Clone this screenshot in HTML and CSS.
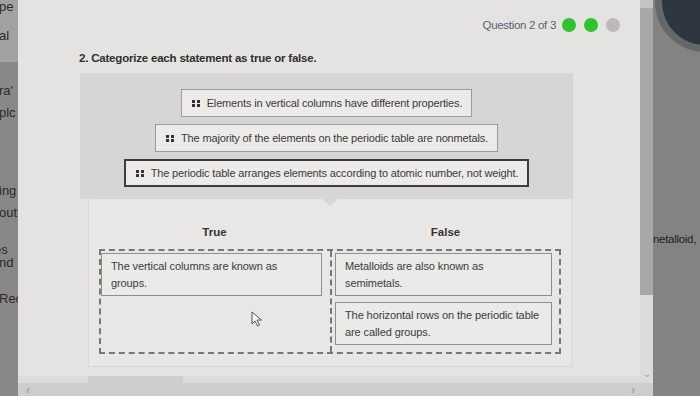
FILE: index.html
```html
<!DOCTYPE html>
<html>
<head>
<meta charset="utf-8">
<link rel="stylesheet" href="styles.css">
</head>
<body>
<div class="screen">
  <div class="left-strip">
    <div class="bg-top"></div>
    <div class="w w1">pe</div>
    <div class="w w2">al</div>
    <div class="w w3">ra'</div>
    <div class="w w4">plc</div>
    <div class="w w5">ing</div>
    <div class="w w6">outl</div>
    <div class="w w7">es</div>
    <div class="w w8">nd</div>
    <div class="w w9">Rec</div>
  </div>

  <div class="middle">
    <div class="upper">
      <div class="modal">
        <div class="header">
          <span class="qcount">Question 2 of 3</span>
          <span class="dot done"></span>
          <span class="dot done"></span>
          <span class="dot"></span>
        </div>
        <div class="title">2. Categorize each statement as true or false.</div>
        <div class="activity">
          <div class="dnd">
            <div class="chip"><span class="grip"><i></i><i></i><i></i><i></i></span>Elements in vertical columns have different properties.</div>
            <div class="chip"><span class="grip"><i></i><i></i><i></i><i></i></span>The majority of the elements on the periodic table are nonmetals.</div>
            <div class="chip active"><span class="grip"><i></i><i></i><i></i><i></i></span>The periodic table arranges elements according to atomic number, not weight.</div>
          </div>
          <div class="targets">
            <div class="labels">
              <div class="label">True</div>
              <div class="label">False</div>
            </div>
            <div class="zones">
              <div class="zone zone-true">
                <div class="card">The vertical columns are known as<br>groups.</div>
                <div class="cursor">
                  <svg width="12" height="16" viewBox="0 0 12 16"><path d="M1 1 L1 13 L4 10 L6.5 15 L8.5 14 L6 9 L10.5 9 Z" fill="#f4f4f4" stroke="#555" stroke-width="1"/></svg>
                </div>
              </div>
              <div class="zone zone-false">
                <div class="card">Metalloids are also known as<br>semimetals.</div>
                <div class="card">The horizontal rows on the periodic table<br>are called groups.</div>
              </div>
            </div>
          </div>
        </div>
        <div class="inner-scroll"><div class="inner-thumb"></div></div>
      </div>
      <div class="vscroll">
        <div class="vthumb"></div>
        <div class="vtrack"><span class="chev">&#8964;</span></div>
      </div>
    </div>
    <div class="hscroll">
      <span class="arrow">&#8249;</span>
      <span class="arrow">&#8250;</span>
    </div>
  </div>

  <div class="right">
    <svg class="disc" width="48" height="52" viewBox="0 0 48 52">
      <circle cx="52" cy="2" r="50" fill="#646866"/>
      <circle cx="52" cy="2" r="43" fill="#2e3640"/>
    </svg>
    <div class="rtext">netalloid,</div>
  </div>
</div>
</body>
</html>
```

FILE: styles.css
```css
* { box-sizing: border-box; }
html, body {
  margin: 0;
  padding: 0;
  width: 700px;
  height: 396px;
  overflow: hidden;
  font-family: "Liberation Sans", Arial, sans-serif;
}
body { background: #858381; }

.screen {
  display: flex;
  width: 700px;
  height: 396px;
}

/* left background strip */
.left-strip {
  width: 18px;
  flex: none;
  background: #8a8886;
  position: relative;
  overflow: hidden;
  color: #2b2b2b;
  font-size: 13px;
  line-height: 14px;
}
.left-strip .bg-top {
  height: 62px;
  background: #a3a19f;
  margin-bottom: -62px;
}
.w { white-space: nowrap; margin-left: -1px; }
.w1 { margin-top: -6px; }
.w2 { margin-top: 15px; }
.w3 { margin-top: 41px; }
.w4 { margin-top: 8px; }
.w5 { margin-top: 64px; }
.w6 { margin-top: 8px; }
.w7 { margin-top: 23px; margin-left: -6px; }
.w8 { margin-top: -1px; }
.w9 { margin-top: 22px; }

/* middle */
.middle {
  width: 635px;
  flex: none;
  display: flex;
  flex-direction: column;
}
.upper {
  display: flex;
  height: 383px;
}
.modal {
  width: 622px;
  background: #e4e3e1;
  display: flex;
  flex-direction: column;
  position: relative;
}
.header {
  display: flex;
  justify-content: flex-end;
  align-items: center;
  gap: 8px;
  height: 14px;
  margin-top: 18px;
  padding-right: 20px;
}
.qcount {
  font-size: 11.5px;
  color: #5d6172;
  letter-spacing: -0.3px;
  margin-right: -2px;
}
.dot {
  width: 14px;
  height: 14px;
  border-radius: 50%;
  background: #bcb9b6;
}
.dot.done { background: #2ec42c; }

.title {
  margin: 19px 0 0 61px;
  font-size: 11.5px;
  font-weight: bold;
  line-height: 14px;
  color: #2f2f2f;
  letter-spacing: -0.2px;
}

.activity {
  margin: 8px 0 0 62px;
  width: 493px;
  flex: 1;
}
.dnd {
  background: #d7d6d4;
  padding: 16px 0 12px;
  display: flex;
  flex-direction: column;
  align-items: center;
  gap: 7px;
  position: relative;
}
.dnd::after {
  content: "";
  position: absolute;
  left: 242px;
  bottom: -7px;
  border-left: 8px solid transparent;
  border-right: 8px solid transparent;
  border-top: 7px solid #d7d6d4;
}
.chip {
  height: 28px;
  display: flex;
  align-items: center;
  padding: 0 9px 0 10px;
  background: #ecebe9;
  border: 1px solid #9c9b99;
  font-size: 11px;
  color: #3a3a3a;
  white-space: nowrap;
  letter-spacing: -0.15px;
}
.chip.active {
  border: 2px solid #3c3c3c;
}
.grip {
  display: grid;
  grid-template-columns: 3px 3px;
  gap: 1px 2px;
  margin-right: 7px;
}
.grip i {
  display: block;
  width: 3px;
  height: 3px;
  background: #333;
}

.targets {
  margin-left: 8px;
  width: 484px;
  height: 168px;
  background: #e8e7e5;
  border: 1px solid #d9d8d6;
  border-top: none;
  padding: 0 0 0 10px;
}
.labels {
  display: flex;
  padding-top: 25px;
  height: 41px;
}
.label {
  width: 231px;
  text-align: center;
  font-size: 11.5px;
  font-weight: bold;
  line-height: 16px;
  color: #333;
}
.zones {
  margin-top: 9px;
  width: 462px;
  height: 105px;
  border: 2px dashed #777;
  display: grid;
  grid-template-columns: 231px 1fr;
}
.zone {
  display: flex;
  flex-direction: column;
  gap: 6px;
  padding: 2px 7px 2px 0;
}
.zone-true {
  border-right: 2px dashed #777;
  padding-right: 8px;
}
.zone-false { padding-left: 3px; }
.card {
  height: 43px;
  border: 1.5px solid #8f8e8c;
  background: #eaeae8;
  padding: 4px 8px 0 9px;
  font-size: 11px;
  line-height: 17px;
  color: #3b3b3b;
  white-space: nowrap;
  letter-spacing: -0.1px;
}
.cursor {
  margin: 9px 0 0 150px;
  height: 16px;
}
.cursor svg { display: block; }

.inner-scroll {
  height: 7px;
  background: #dcdbd9;
}
.inner-thumb {
  width: 95px;
  height: 7px;
  margin-left: 70px;
  background: #cfcecc;
}

.vscroll {
  width: 13px;
  display: flex;
  flex-direction: column;
  background: #dcdbd9;
}
.vthumb {
  height: 295px;
  background: #a9a8a6;
  border-top: 8px solid #c4c3c1;
}
.vtrack {
  flex: 1;
  display: flex;
  align-items: flex-end;
  justify-content: center;
  padding-bottom: 4px;
}
.chev {
  font-size: 10px;
  color: #a5a4a2;
  line-height: 10px;
}

.hscroll {
  height: 13px;
  background: #cecdcb;
  display: flex;
  justify-content: space-between;
  align-items: center;
  padding: 0 18px 0 8px;
}
.arrow {
  font-size: 13px;
  color: #9d9c9a;
  line-height: 12px;
}

/* right background */
.right {
  flex: 1;
  position: relative;
  background: #858381;
  overflow: hidden;
}
.disc {
  position: absolute;
  top: 0;
  left: 0;
  display: block;
}
.rtext {
  margin-top: 233px;
  font-size: 11.5px;
  color: #1f1f1f;
  white-space: nowrap;
  letter-spacing: -0.3px;
}
```
